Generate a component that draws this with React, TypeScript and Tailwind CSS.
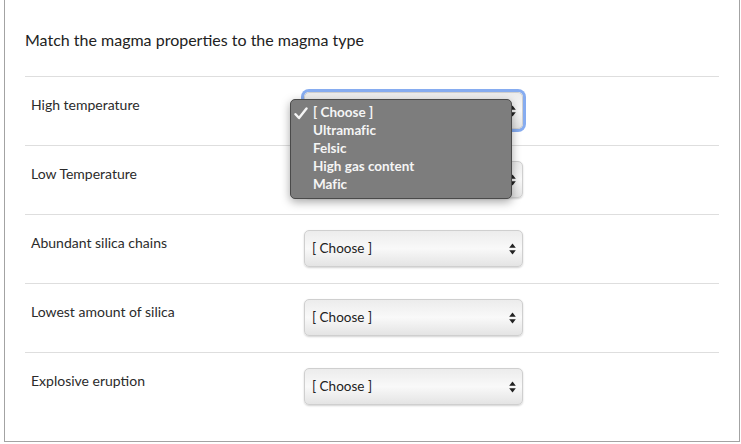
const rows = [
  "High temperature",
  "Low Temperature",
  "Abundant silica chains",
  "Lowest amount of silica",
  "Explosive eruption",
];

const options = ["[ Choose ]", "Ultramafic", "Felsic", "High gas content", "Mafic"];

function Arrows() {
  return (
    <svg width="7" height="12" viewBox="0 0 7 12" className="shrink-0">
      <path d="M3.5 0.5 L6.8 4.8 L0.2 4.8 Z" fill="#222" />
      <path d="M3.5 11.5 L6.8 7.2 L0.2 7.2 Z" fill="#222" />
    </svg>
  );
}

function FakeSelect({ focused }: { focused?: boolean }) {
  return (
    <div
      className={`relative w-[219px] h-[37px] rounded-[5px] border border-[#cfcfcf] bg-gradient-to-b from-[#ececec] via-[#f9f9f9] to-[#e4e4e4] shadow-[0_1px_2px_rgba(0,0,0,0.18)] flex items-center justify-between pl-[7px] pr-[6px] ${
        focused ? "ring-[3px] ring-[#86acf0]" : ""
      }`}
    >
      <span className="text-[13.5px] text-[#222]">{focused ? "" : "[ Choose ]"}</span>
      <Arrows />
    </div>
  );
}

function Popup() {
  return (
    <div className="absolute left-[-14px] top-[7px] w-[222px] h-[100px] rounded-[5px] border border-[#4a4a4a] bg-[#7d7d7d] shadow-[0_3px_10px_rgba(0,0,0,0.35)] pt-[4px] z-10 [font-variant-ligatures:none]">
      {options.map((o, i) => (
        <div key={o} className="flex items-center h-[18px] text-[13.5px] font-bold text-[#f5f5f5] leading-none">
          <span className="w-[22px] pl-[3px]">
            {i === 0 && (
              <svg width="14" height="13" viewBox="0 0 14 13">
                <path d="M1.5 7.2 L5 11 L12.5 1.5" fill="none" stroke="#f5f5f5" strokeWidth="2.4" strokeLinecap="round" strokeLinejoin="round" />
              </svg>
            )}
          </span>
          <span>{o}</span>
        </div>
      ))}
    </div>
  );
}

export default function App() {
  return (
    <div className="w-[741px] h-[444px] bg-white font-['Lato','Open_Sans',sans-serif] text-[#2b2b2b]">
      <div className="ml-[4px] w-[736px] h-[442px] border-x border-b border-[#a3a3a3] pl-[20px] pr-[20px]">
        <div className="h-[76px] pt-[30px] text-[16px] leading-[20px] text-[#222]">
          Match the magma properties to the magma type
        </div>
        {rows.map((label, i) => (
          <div key={label} className={`h-[69px] flex border-t border-[#dedede]`}>
            <div className="w-[279px] pl-[6px] pt-[19px] text-[14px] leading-[18px]">{label}</div>
            <div className="relative mt-[15px]">
              <FakeSelect focused={i === 0} />
              {i === 0 && <Popup />}
            </div>
          </div>
        ))}
      </div>
    </div>
  );
}
